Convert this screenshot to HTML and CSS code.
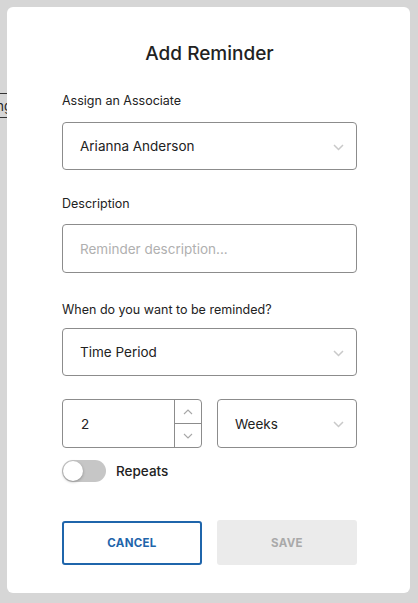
FILE: index.html
```html
<!DOCTYPE html>
<html>
<head>
<meta charset="utf-8">
<link rel="stylesheet" href="styles.css">
</head>
<body>
<div class="behind"><span class="behind-text">Upcoming</span></div>
<div class="modal">
  <h1 class="title">Add Reminder</h1>

  <div class="field f1">
    <div class="label">Assign an Associate</div>
    <div class="select">
      <span class="value">Arianna Anderson</span>
      <svg class="chev" width="11" height="7" viewBox="0 0 11 7"><path d="M1 1l4.5 4.5L10 1" fill="none" stroke="#c9c9c9" stroke-width="1.5"/></svg>
    </div>
  </div>

  <div class="field f2">
    <div class="label">Description</div>
    <div class="input"><span class="placeholder">Reminder description...</span></div>
  </div>

  <div class="field f3">
    <div class="label">When do you want to be reminded?</div>
    <div class="select">
      <span class="value">Time Period</span>
      <svg class="chev" width="11" height="7" viewBox="0 0 11 7"><path d="M1 1l4.5 4.5L10 1" fill="none" stroke="#c9c9c9" stroke-width="1.5"/></svg>
    </div>
  </div>

  <div class="row">
    <div class="number">
      <span class="value num">2</span>
      <div class="spin">
        <div class="spin-btn"><svg width="10" height="6" viewBox="0 0 10 6"><path d="M1 5l4-4 4 4" fill="none" stroke="#a8a8a8" stroke-width="1.1"/></svg></div>
        <div class="spin-btn"><svg width="10" height="6" viewBox="0 0 10 6"><path d="M1 1l4 4 4-4" fill="none" stroke="#a8a8a8" stroke-width="1.1"/></svg></div>
      </div>
    </div>
    <div class="select small">
      <span class="value">Weeks</span>
      <svg class="chev" width="11" height="7" viewBox="0 0 11 7"><path d="M1 1l4.5 4.5L10 1" fill="none" stroke="#c9c9c9" stroke-width="1.5"/></svg>
    </div>
  </div>

  <div class="toggle-row">
    <div class="toggle"><div class="knob"></div></div>
    <span class="toggle-label">Repeats</span>
  </div>

  <div class="buttons">
    <button class="btn cancel">CANCEL</button>
    <button class="btn save">SAVE</button>
  </div>
</div>
</body>
</html>
```
FILE: styles.css
```css
* { box-sizing: border-box; }
html, body { margin: 0; padding: 0; }
body {
  background: #d6d6d6;
  font-family: "Inter", "Open Sans", sans-serif;
  color: #222;
  width: 418px;
  height: 603px;
  overflow: hidden;
  position: relative;
  padding: 7px 8px 0 7px;
}
.behind {
  position: absolute;
  left: -70px;
  top: 93px;
  width: 90px;
  height: 25px;
  border-top: 1px solid #333;
  border-bottom: 1px solid #333;
  display: flex;
  align-items: center;
  justify-content: flex-end;
  padding-right: 8px;
  font-size: 13px;
  color: #222;
  white-space: nowrap;
}
.modal {
  position: relative;
  background: #fff;
  border-radius: 6px;
  width: 403px;
  height: 586px;
  padding: 35px 53px 0 55px;
}
.title {
  margin: 0;
  font-size: 19px;
  line-height: 24px;
  font-weight: 500;
  text-align: center;
  color: #222;
}
.label {
  font-size: 12.5px;
  line-height: 18px;
  font-weight: 400;
  color: #222;
}
.f1 { margin-top: 26px; }
.f1 .label { margin-bottom: 12px; }
.f2 { margin-top: 25px; }
.f2 .label { margin-bottom: 11px; }
.f3 { margin-top: 28px; }
.f3 .label { margin-bottom: 9px; }
.select, .input, .number {
  height: 48px;
  border: 1px solid #8c8c8c;
  border-radius: 4px;
  display: flex;
  align-items: center;
  padding-left: 17px;
}
.input { height: 49px; }
.select { justify-content: space-between; padding-right: 12px; }
.value { font-size: 13.5px; color: #222; }
.placeholder { font-size: 13.5px; color: #b0b0b0; }
.chev { margin-top: 2px; }
.row {
  display: flex;
  gap: 15px;
  margin-top: 23px;
}
.number {
  width: 140px;
  height: 49px;
  padding-left: 0;
  justify-content: space-between;
  overflow: hidden;
}
.num { padding-left: 18px; }
.spin {
  width: 27px;
  height: 100%;
  border-left: 1px solid #8c8c8c;
  display: flex;
  flex-direction: column;
}
.spin-btn {
  flex: 1;
  display: flex;
  align-items: center;
  justify-content: center;
}
.spin-btn + .spin-btn { border-top: 1px solid #8c8c8c; }
.select.small { width: 140px; height: 49px; padding-left: 17px; }
.toggle-row {
  display: flex;
  align-items: center;
  gap: 10px;
  margin-top: 12px;
}
.toggle {
  width: 44px;
  height: 22px;
  border-radius: 11px;
  background: #c6c6c6;
  position: relative;
}
.knob {
  position: absolute;
  left: 1px;
  top: 1px;
  width: 20px;
  height: 20px;
  border-radius: 50%;
  background: #fff;
  box-shadow: 0 1px 3px rgba(0,0,0,0.3);
}
.toggle-label { font-size: 13.5px; font-weight: 500; color: #222; }
.buttons {
  display: flex;
  gap: 15px;
  margin-top: 38px;
}
.btn {
  width: 140px;
  height: 45px;
  border-radius: 3px;
  font-family: "Inter", "Open Sans", sans-serif;
  font-size: 11.5px;
  font-weight: 700;
  letter-spacing: 0.3px;
}
.cancel {
  background: #fff;
  border: 2px solid #1f65ab;
  color: #1f65ab;
  height: 44px;
  margin-top: 1px;
}
.save {
  background: #ebebeb;
  border: none;
  color: #a9a9a9;
}
```
